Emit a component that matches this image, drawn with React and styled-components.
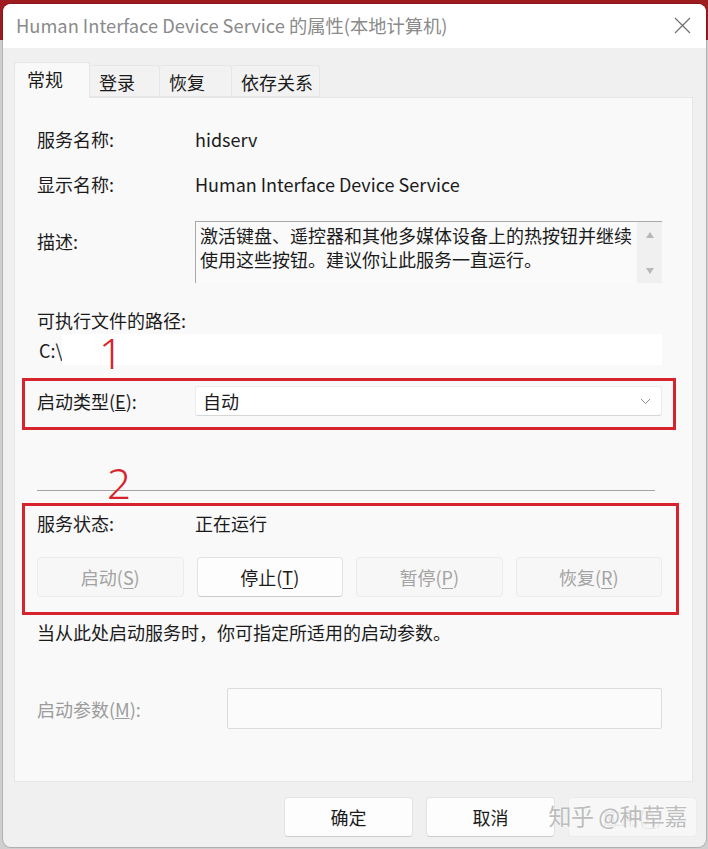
import styled, { createGlobalStyle } from "styled-components";

const GlobalStyle = createGlobalStyle`
  html, body {
    margin: 0;
    padding: 0;
  }
  body {
    width: 708px;
    height: 849px;
    overflow: hidden;
    background: linear-gradient(to bottom, #9e1b20 0 40px, #cfcfcf 40px);
    font-family: "Noto Sans CJK SC", "Noto Sans", sans-serif;
    line-height: 24px;
    color: #1b1b1b;
  }
`;

const Dialog = styled.div`
  margin: 4px 0 0 3px;
  width: 703px;
  height: 843px;
  border-radius: 8px;
  overflow: hidden;
  background: #f0f0f0;
  display: flex;
  flex-direction: column;
  box-shadow: 0 0 0 1px rgba(0, 0, 0, 0.15);
`;

const TitleBar = styled.div`
  height: 44px;
  flex: none;
  background: #ffffff;
  display: flex;
  align-items: center;
  justify-content: space-between;
  padding: 0 14px 0 13px;
`;

const Title = styled.div`
  font-size: 18.3px;
  color: #8a8a8a;
  margin-top: -2px;
`;

const CloseBtn = styled.div`
  width: 20px;
  height: 20px;
  display: flex;
  align-items: center;
  justify-content: center;
  margin-top: -2px;
`;

const Body = styled.div`
  flex: 1;
  padding: 14px 13px 10px 11px;
  display: flex;
  flex-direction: column;
`;

const Tabs = styled.div`
  display: flex;
  align-items: flex-end;
  height: 35px;
  position: relative;
  z-index: 1;
`;

const Tab = styled.div`
  width: ${(p) => p.$w}px;
  height: ${(p) => (p.$active ? "36px" : "32px")};
  margin-bottom: ${(p) => (p.$active ? "-1px" : "0")};
  box-sizing: border-box;
  padding-left: ${(p) => (p.$active ? "12px" : "9px")};
  padding-top: ${(p) => (p.$active ? "0" : "2px")};
  padding-bottom: ${(p) => (p.$active ? "4px" : "0")};
  display: flex;
  align-items: center;
  font-size: 18px;
  background: ${(p) => (p.$active ? "#f9f9f9" : "#f2f2f2")};
  border: 1px solid #e6e6e6;
  border-bottom: ${(p) => (p.$active ? "none" : "1px solid #e6e6e6")};
  border-left: ${(p) => (p.$first || p.$active ? "1px solid #e6e6e6" : "none")};
  border-radius: 3px 3px 0 0;
  color: #1b1b1b;
`;

const Panel = styled.div`
  height: 685px;
  box-sizing: border-box;
  background: #f9f9f9;
  border: 1px solid #e6e6e6;
  padding: 0 30px 0 22px;
  display: flex;
  flex-direction: column;
`;

const InfoRow = styled.div`
  display: flex;
  align-items: ${(p) => (p.$top ? "flex-start" : "center")};
  min-height: 24px;
  margin-top: ${(p) => p.$mt}px;
  font-size: 18px;
  line-height: 24px;
`;

const Label = styled.div`
  width: ${(p) => p.$w || 158}px;
  flex: none;
  color: ${(p) => (p.$disabled ? "#9c9c9c" : "#1b1b1b")};
  padding-top: ${(p) => p.$pt || 0}px;
`;

const Value = styled.div`
  color: #1b1b1b;
`;

const DescBox = styled.div`
  flex: 1;
  height: 62px;
  box-sizing: border-box;
  border-top: 1px solid #a9a9a9;
  border-left: 1px solid #a9a9a9;
  background: #fafafa;
  display: flex;
`;

const DescText = styled.div`
  flex: 1;
  padding: 1px 0 0 4px;
  font-size: 18px;
  line-height: 24px;
  color: #1b1b1b;
`;

const ScrollTrack = styled.div`
  width: 25px;
  background: #f0f0f0;
  display: flex;
  flex-direction: column;
  justify-content: space-between;
  align-items: center;
  padding: 10px 0 9px;
  box-sizing: border-box;
`;

const Arrow = styled.div`
  width: 0;
  height: 0;
  border-left: 4px solid transparent;
  border-right: 4px solid transparent;
  ${(p) =>
    p.$down ? "border-top: 6px solid #b8b8b8;" : "border-bottom: 6px solid #b8b8b8;"}
`;

const PathRow = styled.div`
  display: flex;
  align-items: center;
  height: 31px;
  margin-top: 2px;
  font-size: 18px;
`;

const PathText = styled.div`
  width: 23px;
  padding-left: 2px;
  flex: none;
`;

const PathMask = styled.div`
  flex: 1;
  height: 31px;
  background: #ffffff;
`;

const Highlight = styled.div`
  position: relative;
  margin-top: ${(p) => p.$mt}px;

  &::after {
    content: "";
    position: absolute;
    inset: ${(p) => p.$inset};
    border: 3px solid #d7232b;
    pointer-events: none;
  }
`;

const Marker = styled.div`
  position: absolute;
  left: ${(p) => p.$left}px;
  top: ${(p) => p.$top}px;
  font-family: "Noto Sans", "Liberation Sans", sans-serif;
  font-weight: 300;
  font-size: 42px;
  line-height: 1;
  color: #d7232b;
`;

const ComboRow = styled.div`
  display: flex;
  align-items: center;
  font-size: 18px;
`;

const Combo = styled.div`
  flex: 1;
  height: 30px;
  box-sizing: border-box;
  background: #ffffff;
  border: 1px solid #ececec;
  border-bottom-color: #d6d6d6;
  border-radius: 3px;
  display: flex;
  align-items: center;
  justify-content: space-between;
  padding: 0 10px 0 7px;
`;

const Separator = styled.div`
  height: 1px;
  background: #a3a3a3;
  margin-top: 74px;
  margin-right: 7px;
`;

const ButtonGrid = styled.div`
  display: grid;
  grid-template-columns: repeat(4, 1fr);
  gap: 13px;
  margin-top: 22px;
`;

const Btn = styled.div`
  height: 40px;
  width: ${(p) => (p.$w ? `${p.$w}px` : "auto")};
  box-sizing: border-box;
  border-radius: 4px;
  display: flex;
  align-items: center;
  justify-content: center;
  font-size: 18px;
  line-height: 24px;
  background: ${(p) => (p.$disabled ? "#f7f7f7" : "#fdfdfd")};
  color: ${(p) => (p.$disabled ? "#a3a3a3" : "#1b1b1b")};
  border: 1px solid ${(p) => (p.$disabled ? "#ececec" : "#e3e3e3")};
  border-bottom-color: ${(p) => (p.$disabled ? "#ececec" : "#cdcdcd")};

  u {
    text-underline-offset: 3px;
  }
`;

const Hint = styled.div`
  margin-top: 23px;
  font-size: 18px;
  line-height: 24px;
`;

const ParamBox = styled.div`
  flex: 1;
  height: 41px;
  box-sizing: border-box;
  background: #fbfbfb;
  border: 1px solid #dcdcdc;
  border-radius: 2px;
`;

const Footer = styled.div`
  display: flex;
  justify-content: flex-end;
  gap: 13px;
  margin-top: 15px;
  margin-right: -4px;
  position: relative;
`;

const Watermark = styled.div`
  position: absolute;
  right: 10px;
  top: 6px;
  font-size: 23px;
  color: #bdbdbd;
  letter-spacing: -0.5px;
  text-shadow: 0 0 2px #ffffff;
  pointer-events: none;
`;

const Chevron = () => (
  <svg width="11" height="7" viewBox="0 0 11 7">
    <path d="M1 1 L5.5 5.5 L10 1" fill="none" stroke="#8a8a8a" strokeWidth="1" />
  </svg>
);

const CloseIcon = () => (
  <svg width="17" height="17" viewBox="0 0 17 17">
    <path d="M1 1 L16 16 M16 1 L1 16" stroke="#6f6f6f" strokeWidth="1.2" fill="none" />
  </svg>
);

const App = () => {
  return (
    <>
      <GlobalStyle />
      <Dialog>
        <TitleBar>
          <Title>Human Interface Device Service 的属性(本地计算机)</Title>
          <CloseBtn>
            <CloseIcon />
          </CloseBtn>
        </TitleBar>
        <Body>
          <Tabs>
            <Tab $active $w={76}>常规</Tab>
            <Tab $w={70}>登录</Tab>
            <Tab $w={72}>恢复</Tab>
            <Tab $w={88}>依存关系</Tab>
          </Tabs>
          <Panel>
            <InfoRow $mt={29}>
              <Label>服务名称:</Label>
              <Value>hidserv</Value>
            </InfoRow>
            <InfoRow $mt={21}>
              <Label>显示名称:</Label>
              <Value>Human Interface Device Service</Value>
            </InfoRow>
            <InfoRow $mt={25} $top>
              <Label $pt={8}>描述:</Label>
              <DescBox>
                <DescText>
                  激活键盘、遥控器和其他多媒体设备上的热按钮并继续使用这些按钮。建议你让此服务一直运行。
                </DescText>
                <ScrollTrack>
                  <Arrow />
                  <Arrow $down />
                </ScrollTrack>
              </DescBox>
            </InfoRow>
            <InfoRow $mt={25}>
              <Label>可执行文件的路径:</Label>
            </InfoRow>
            <PathRow>
              <PathText>C:\</PathText>
              <PathMask />
            </PathRow>

            <Highlight $mt={21} $inset="-8px -14px -14px -15px">
              <Marker $left={62} $top={-54}>1</Marker>
              <ComboRow>
                <Label>
                  启动类型(<u>E</u>):
                </Label>
                <Combo>
                  <span>自动</span>
                  <Chevron />
                </Combo>
              </ComboRow>
            </Highlight>

            <Separator />

            <Highlight $mt={20} $inset="-8px -17px -18px -15px">
              <Marker $left={70} $top={-49}>2</Marker>
              <InfoRow $mt={0}>
                <Label>服务状态:</Label>
                <Value>正在运行</Value>
              </InfoRow>
              <ButtonGrid>
                <Btn $disabled>
                  启动(<u>S</u>)
                </Btn>
                <Btn>
                  停止(<u>T</u>)
                </Btn>
                <Btn $disabled>
                  暂停(<u>P</u>)
                </Btn>
                <Btn $disabled>
                  恢复(<u>R</u>)
                </Btn>
              </ButtonGrid>
            </Highlight>

            <Hint>当从此处启动服务时，你可指定所适用的启动参数。</Hint>

            <InfoRow $mt={44}>
              <Label $w={190} $disabled>
                启动参数(<u>M</u>):
              </Label>
              <ParamBox />
            </InfoRow>
          </Panel>
          <Footer>
            <Btn $w={129}>确定</Btn>
            <Btn $w={129}>取消</Btn>
            <Btn $w={129} $disabled style={{ color: "#e4e4e4" }}>
              应用(<u>A</u>)
            </Btn>
            <Watermark>知乎 @种草嘉</Watermark>
          </Footer>
        </Body>
      </Dialog>
    </>
  );
};

export default App;
